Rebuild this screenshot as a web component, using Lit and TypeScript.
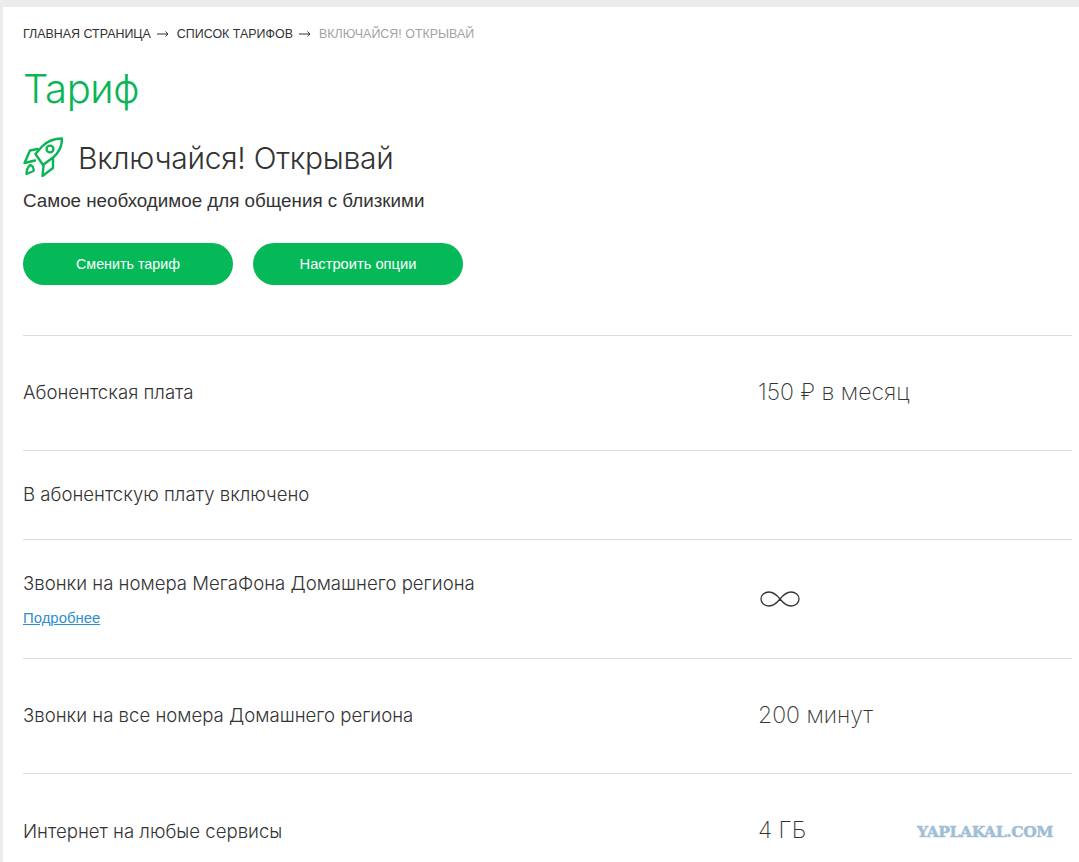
import { LitElement, html, css } from "lit";
import { customElement } from "lit/decorators.js";

@customElement("app-root")
export class AppRoot extends LitElement {
  static styles = css`
    :host { display: block; width: 1079px; height: 862px; overflow: hidden; background: #ececec; position: relative; font-family: "Inter", "Liberation Sans", sans-serif; color: #333; }
    .page { margin: 7px 0 0 3px; height: 855px; background: #fff; padding: 0 7px 0 20px; box-sizing: border-box; overflow: hidden; }
    .crumbs { display: flex; align-items: center; height: 14px; margin-top: 20px; font: 12.45px/14px "Liberation Sans", sans-serif; color: #333; white-space: nowrap; }
    .crumbs svg { margin: 0 8px 0 6px; }
    .crumbs .cur { color: #a3a3a3; }
    h1 { margin: 24px 0 0; font-size: 40px; line-height: 48px; font-weight: 300; color: #0bb556; letter-spacing: -0.4px; }
    .title { display: flex; align-items: center; margin-top: 24px; gap: 15px; height: 44px; }
    .title svg { margin-top: -4px; }
    .title span { font-size: 30px; font-weight: 300; line-height: 42px; padding-bottom: 2px; letter-spacing: -0.25px; color: #333; }
    .sub { margin-top: 8px; font: 18.8px/24px "Liberation Sans", sans-serif; color: #333; }
    .btns { display: flex; gap: 20px; margin-top: 30px; }
    .btn { width: 210px; height: 42px; border-radius: 21px; background: #05b858; color: #fff; display: flex; align-items: center; justify-content: center; font: 14.3px/16px "Liberation Sans", sans-serif; }
    .btn + .btn { font-size: 14.7px; }
    .rows { margin-top: 50px; border-top: 1px solid #dcdcdc; }
    .row { display: flex; border-bottom: 1px solid #dcdcdc; box-sizing: border-box; align-items: center; }
    .r1, .r4, .r5 { height: 115px; }
    .r2 { height: 89px; }
    .r3 { height: 119px; }
    .r5 { border-bottom: 0; }
    .label { width: 735px; font-size: 18.6px; line-height: 24px; font-weight: 300; color: #333; flex: none; padding-bottom: 2px; }
    .r3 .label { padding-bottom: 0; }
    .val { font-size: 23px; line-height: 30px; font-weight: 200; color: #333; padding-bottom: 3px; }
    .more { display: block; margin-top: 14px; font: 14.9px/18px "Liberation Sans", sans-serif; color: #2f8fd0; text-decoration: underline; }
    .inf { display: block; margin: 0 0 0 2px; }
    .mark { position: absolute; left: 917px; top: 823px; font: 900 15.5px/18px "DejaVu Serif", serif; color: #9fbfd4; -webkit-text-stroke: 0.5px #9fbfd4; letter-spacing: -0.4px; }
  `;
  render() {
    const arrow = html`<svg width="12" height="8" viewBox="0 0 12 8" fill="none" stroke="#333" stroke-width="1"><path d="M0 4h11M8.500 1.500 11 4 8.500 6.500"/></svg>`;
    return html`<div class="page">
      <div class="crumbs"><span>ГЛАВНАЯ СТРАНИЦА</span>${arrow}<span>СПИСОК ТАРИФОВ</span>${arrow}<span class="cur">ВКЛЮЧАЙСЯ! ОТКРЫВАЙ</span></div>
      <h1>Тариф</h1>
      <div class="title">
        <svg width="40" height="40" viewBox="0 0 40 40" fill="none" stroke="#0bb556" stroke-width="2.400" stroke-linejoin="round" stroke-linecap="round">
          <path d="M39 1.500C31 1.500 24 4.500 19 9.500L12.500 17 20 28 30 20.500C36 15.500 39 9 39 1.500Z"/>
          <circle cx="27" cy="12" r="3.400"/>
          <path d="M14.500 12 7 13.500 1.500 26 12 23.500"/>
          <path d="M30 21 30 31 19.500 39 20.500 29"/>
          <path d="M3.500 37 10.500 34C11 31 9.500 28.500 7 28 5 30 3.500 33 3.500 37Z"/>
        </svg>
        <span>Включайся! Открывай</span>
      </div>
      <div class="sub">Самое необходимое для общения с близкими</div>
      <div class="btns"><div class="btn">Сменить тариф</div><div class="btn">Настроить опции</div></div>
      <div class="rows">
        <div class="row r1"><div class="label">Абонентская плата</div><div class="val">150 ₽ в месяц</div></div>
        <div class="row r2"><div class="label">В абонентскую плату включено</div></div>
        <div class="row r3"><div class="label">Звонки на номера МегаФона Домашнего региона<a class="more">Подробнее</a></div>
          <svg class="inf" width="40" height="16" viewBox="0 0 40 16" fill="none" stroke="#333" stroke-width="1.300"><path d="M20 8C16 3 13 1 9 1 4.500 1 1 4 1 8s3.500 7 8 7c4 0 7-2 11-7s7-7 11-7c4.500 0 8 3 8 7s-3.500 7-8 7c-4 0-7-2-11-7Z"/></svg>
        </div>
        <div class="row r4"><div class="label">Звонки на все номера Домашнего региона</div><div class="val">200 минут</div></div>
        <div class="row r5"><div class="label">Интернет на любые сервисы</div><div class="val">4 ГБ</div></div>
      </div>
    </div>
    <div class="mark">YAPLAKAL.COM</div>`;
  }
}
